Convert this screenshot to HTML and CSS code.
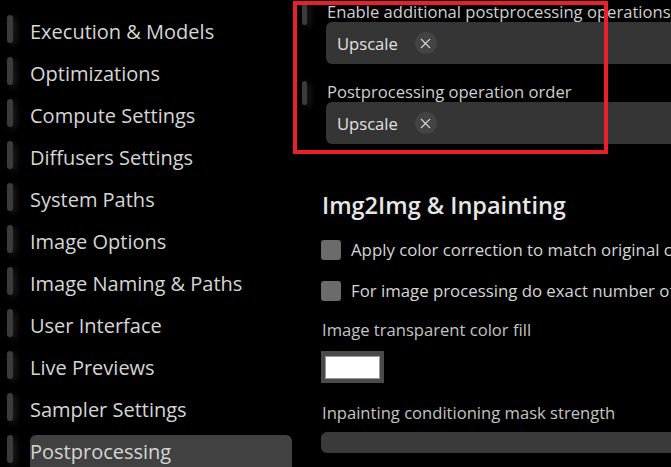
FILE: index.html
```html
<!DOCTYPE html>
<html>
<head>
<meta charset="utf-8">
<link rel="stylesheet" href="styles.css">
</head>
<body>
<nav class="sidebar">
  <div class="nav-item"><span class="pill"></span><span class="nav-text">Execution &amp; Models</span></div>
  <div class="nav-item"><span class="pill"></span><span class="nav-text">Optimizations</span></div>
  <div class="nav-item"><span class="pill"></span><span class="nav-text">Compute Settings</span></div>
  <div class="nav-item"><span class="pill"></span><span class="nav-text">Diffusers Settings</span></div>
  <div class="nav-item"><span class="pill"></span><span class="nav-text">System Paths</span></div>
  <div class="nav-item"><span class="pill"></span><span class="nav-text">Image Options</span></div>
  <div class="nav-item"><span class="pill"></span><span class="nav-text">Image Naming &amp; Paths</span></div>
  <div class="nav-item"><span class="pill"></span><span class="nav-text">User Interface</span></div>
  <div class="nav-item"><span class="pill"></span><span class="nav-text">Live Previews</span></div>
  <div class="nav-item"><span class="pill"></span><span class="nav-text">Sampler Settings</span></div>
  <div class="nav-item active"><span class="pill"></span><span class="nav-text">Postprocessing</span></div>
</nav>
<main class="main">
  <div class="setting">
    <span class="pill small"></span>
    <div class="setting-body">
      <div class="label">Enable additional postprocessing operations</div>
      <div class="chips"><span class="chip">Upscale</span><span class="chip-x"><svg viewBox="0 0 12 12" width="12" height="12"><path d="M1.5 1.5 L10.5 10.5 M10.5 1.5 L1.5 10.5" stroke="#dcdcdc" stroke-width="1.5" stroke-linecap="round" fill="none"/></svg></span></div>
    </div>
  </div>
  <div class="setting">
    <span class="pill small"></span>
    <div class="setting-body">
      <div class="label">Postprocessing operation order</div>
      <div class="chips"><span class="chip">Upscale</span><span class="chip-x"><svg viewBox="0 0 12 12" width="12" height="12"><path d="M1.5 1.5 L10.5 10.5 M10.5 1.5 L1.5 10.5" stroke="#dcdcdc" stroke-width="1.5" stroke-linecap="round" fill="none"/></svg></span></div>
    </div>
  </div>
  <section class="section">
    <h2 class="heading">Img2Img &amp; Inpainting</h2>
    <div class="check-row"><span class="checkbox"></span><span class="check-text">Apply color correction to match original colors</span></div>
    <div class="check-row"><span class="checkbox"></span><span class="check-text">For image processing do exact number of steps as specified</span></div>
    <div class="field-label">Image transparent color fill</div>
    <div class="swatch"><span class="swatch-inner"></span></div>
    <div class="field-label second">Inpainting conditioning mask strength</div>
    <div class="slider"></div>
  </section>
  <div class="highlight-box"></div>
</main>
</body>
</html>
```

FILE: styles.css
```css
html, body {
  margin: 0;
  padding: 0;
  background: #000;
  height: 100%;
  overflow: hidden;
}
body {
  display: flex;
  font-family: "Open Sans", "Noto Sans", "DejaVu Sans", sans-serif;
  color: #d0d0d0;
  position: relative;
}
.sidebar {
  width: 292px;
  flex: none;
  padding-top: 11px;
}
.nav-item {
  display: flex;
  align-items: flex-start;
  height: 42px;
}
.pill {
  flex: none;
  width: 6px;
  height: 28px;
  margin: 4px 17px 0 7px;
  border-radius: 3px;
  background: #3b3b3b;
  box-shadow: 3px 2px 6px rgba(70, 70, 70, 0.45);
}
.nav-text {
  font-size: 20px;
  line-height: 42px;
  height: 42px;
  white-space: nowrap;
  color: #d6d6d6;
}
.nav-item.active .nav-text {
  flex: 1;
  background: #414141;
  border-radius: 6px 6px 0 0;
  margin-top: 4px;
  line-height: 34px;
  height: 40px;
}
.main {
  flex: 1;
  min-width: 0;
  padding-top: 2px;
  overflow: hidden;
}
.setting {
  display: flex;
  margin-bottom: 18px;
}
.pill.small {
  width: 5px;
  height: 24px;
  margin: -1px 19px 0 10px;
}
.setting-body {
  flex: 1;
}
.label {
  height: 20px;
  line-height: 20px;
  font-size: 16.6px;
  padding-left: 1px;
  white-space: nowrap;
  color: #cfcfcf;
}
.chips {
  height: 42px;
  background: #353535;
  border-radius: 6px 0 0 6px;
  display: flex;
  align-items: center;
  padding-left: 11px;
}
.chip {
  font-size: 16.6px;
  color: #e2e2e2;
}
.chip-x {
  width: 22px;
  height: 22px;
  border-radius: 50%;
  background: #444;
  display: flex;
  align-items: center;
  justify-content: center;
  margin-left: 17px;
}
.chip-x svg {
  width: 11px;
  height: 11px;
}
.section {
  padding-left: 29px;
}
.heading {
  margin: 45px 0 0 1px;
  font-size: 23.5px;
  line-height: 32px;
  font-weight: 600;
  color: #e6e6e6;
  white-space: nowrap;
}
.check-row {
  display: flex;
  align-items: center;
  height: 41px;
  white-space: nowrap;
}
.check-row:first-of-type {
  margin-top: 8px;
}
.checkbox {
  flex: none;
  width: 20px;
  height: 20px;
  border-radius: 3px;
  background: #6b6b6b;
  margin-right: 10px;
}
.check-text {
  font-size: 16.8px;
  color: #d6d6d6;
}
.field-label {
  margin-top: 8px;
  font-size: 16.6px;
  line-height: 22px;
  color: #c4c4c4;
  padding-left: 1px;
  white-space: nowrap;
}
.field-label.second {
  margin-top: 19px;
}
.swatch {
  margin-top: 10px;
  width: 63px;
  height: 32px;
  box-sizing: border-box;
  background: #4a4a4a;
  padding: 5px 4px 4px 4px;
}
.swatch-inner {
  display: block;
  width: 100%;
  height: 100%;
  box-sizing: border-box;
  background: #fff;
  border: 1px solid #9a9a9a;
}
.slider {
  margin-top: 8px;
  height: 21px;
  background: #3a3a3a;
  border-radius: 6px 0 0 6px;
}
.highlight-box {
  position: absolute;
  left: 293px;
  top: 1px;
  width: 315px;
  height: 153px;
  box-sizing: border-box;
  border: 4.5px solid #e8202a;
}
```
